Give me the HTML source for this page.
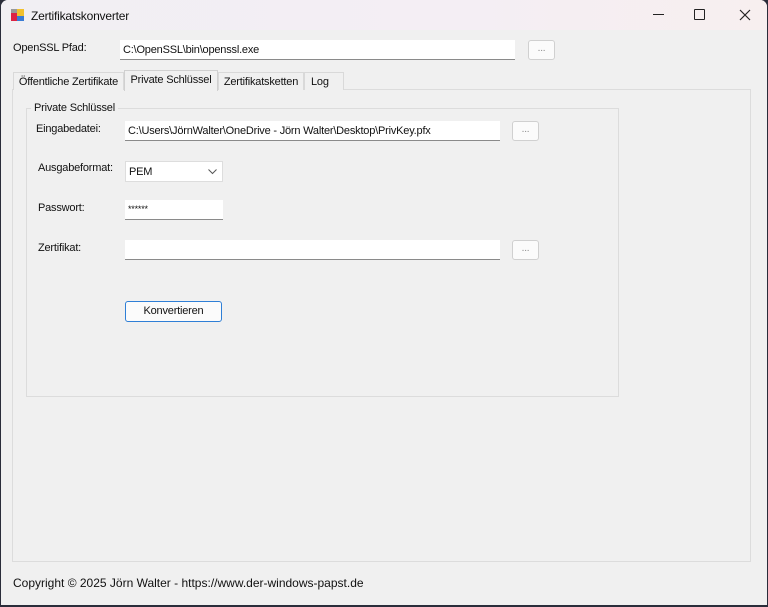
<!DOCTYPE html>
<html><head><meta charset="utf-8"><style>
*{box-sizing:border-box;margin:0;padding:0}
body{width:768px;height:607px;background:#2a2d3a;font-family:"Liberation Sans",sans-serif;font-size:11px;color:#111;position:relative;overflow:hidden;letter-spacing:-0.2px}
.win{position:absolute;left:1px;top:0;width:766px;height:605px;background:#f0f0f0;border-radius:7px 7px 0 0;overflow:hidden}
.title{position:absolute;left:0;top:0;width:100%;height:30px;background:linear-gradient(90deg,#f1eff3,#f4eef4 60%,#f7efef)}
.a{position:absolute;white-space:nowrap}
.tb{position:absolute;background:#fff;border-bottom:1px solid #8a8a8a;height:20px;padding:4px 3px;font-size:11px;white-space:nowrap;overflow:hidden}
.btn{position:absolute;background:#fbfbfb;border:1px solid #d0d0d0;border-radius:3px;height:20px;width:27px;text-align:center;font-size:10px;color:#888;line-height:16px}
.tab{position:absolute;top:72px;height:18px;border:1px solid #d9d9d9;border-bottom:none;background:#f0f0f0;padding:3px 0;font-size:11px;text-align:center;white-space:nowrap;overflow:hidden}
</style></head><body><div class="win">
<div class="title"></div>
<svg class="a" style="left:10px;top:8px" width="14" height="14"><rect x="0" y="5" width="6" height="8" fill="#d24"/><rect x="6" y="1" width="7" height="7" fill="#f2c12e"/><rect x="6" y="8" width="7" height="5" fill="#3a7bd5"/><rect x="0" y="1" width="6" height="4" fill="#999"/></svg>
<div class="a" style="left:30px;top:9px;font-size:12px">Zertifikatskonverter</div>
<div class="a" style="left:652px;top:14px;width:11px;height:1px;background:#222"></div>
<div class="a" style="left:693px;top:9px;width:11px;height:11px;border:1px solid #222;border-radius:1px"></div>
<svg class="a" style="left:738px;top:9px" width="12" height="12"><path d="M1 1L11 11M11 1L1 11" stroke="#222" stroke-width="1.2"/></svg>
<div class="a" style="left:12px;top:42px">OpenSSL Pfad:</div>
<div class="tb" style="left:119px;top:40px;width:395px">C:\OpenSSL\bin\openssl.exe</div>
<div class="btn" style="left:527px;top:40px">...</div>
<div class="a" style="left:11px;top:89px;width:739px;height:473px;border:1px solid #dcdcdc"></div>
<div class="tab" style="left:12px;width:111px">Öffentliche Zertifikate</div>
<div class="tab" style="left:123px;top:70px;height:21px;width:94px;background:#f0f0f0;border-color:#d0d0d0;padding-top:3px">Private Schlüssel</div>
<div class="tab" style="left:217px;width:86px">Zertifikatsketten</div>
<div class="tab" style="left:303px;width:40px;text-align:left;padding-left:6px">Log</div>
<div class="a" style="left:25px;top:108px;width:593px;height:289px;border:1px solid #dcdcdc"></div>
<div class="a" style="left:30px;top:102px;background:#f0f0f0;padding:0 3px">Private Schlüssel</div>
<div class="a" style="left:35px;top:123px">Eingabedatei:</div>
<div class="tb" style="left:124px;top:121px;width:375px">C:\Users\JörnWalter\OneDrive - Jörn Walter\Desktop\PrivKey.pfx</div>
<div class="btn" style="left:511px;top:121px">...</div>
<div class="a" style="left:37px;top:162px">Ausgabeformat:</div>
<div class="tb" style="left:124px;top:161px;width:98px;border:1px solid #ddd;height:21px">PEM</div>
<svg class="a" style="left:207px;top:169px" width="9" height="6"><path d="M0.5 0.5L4.5 4.5L8.5 0.5" stroke="#555" fill="none"/></svg>
<div class="a" style="left:37px;top:202px">Passwort:</div>
<div class="tb" style="left:124px;top:200px;width:98px;font-size:9px;padding-top:4px">******</div>
<div class="a" style="left:37px;top:242px">Zertifikat:</div>
<div class="tb" style="left:124px;top:240px;width:375px"></div>
<div class="btn" style="left:511px;top:240px">...</div>
<div class="a" style="left:124px;top:301px;width:97px;height:21px;border:1px solid #2f7fd6;border-radius:3px;background:#fbfbfb;text-align:center;line-height:19px">Konvertieren</div>
<div class="a" style="left:12px;top:576px;font-size:12px;letter-spacing:0">Copyright © 2025 Jörn Walter - https://www.der-windows-papst.de</div>
</div></body></html>
